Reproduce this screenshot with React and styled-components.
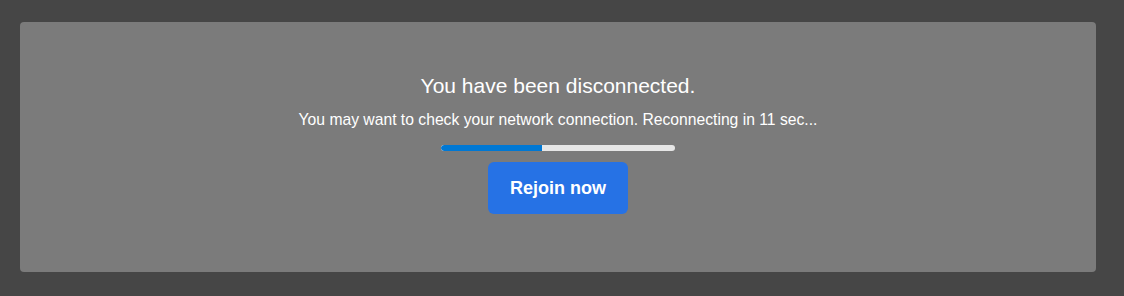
import React from "react";
import styled, { createGlobalStyle } from "styled-components";

const GlobalStyle = createGlobalStyle`
  html, body {
    margin: 0;
    padding: 0;
    background: #464646;
    font-family: "Liberation Sans", Arial, sans-serif;
  }
`;

const Page = styled.div`
  height: 296px;
  padding: 22px 28px 24px 20px;
  box-sizing: border-box;
`;

const Panel = styled.div`
  height: 250px;
  box-sizing: border-box;
  padding-top: 52px;
  background: #7b7b7b;
  border-radius: 4px;
  display: flex;
  flex-direction: column;
  align-items: center;
  color: #fff;
`;

const Title = styled.h2`
  margin: 0;
  font-size: 21px;
  font-weight: 400;
  line-height: 24px;
`;

const Message = styled.p`
  margin: 12px 0 0;
  font-size: 15.7px;
  line-height: 20px;
`;

const Track = styled.div`
  margin-top: 15px;
  width: 234px;
  height: 6px;
  border-radius: 3px;
  background: #e6e6e6;
  overflow: hidden;
`;

const Fill = styled.div`
  height: 100%;
  background: #0078d4;
  border-radius: 3px 0 0 3px;
`;

const RejoinButton = styled.button`
  margin-top: 11px;
  width: 140px;
  height: 52px;
  border: none;
  border-radius: 6px;
  background: #2672e5;
  color: #fff;
  font-family: inherit;
  font-size: 18px;
  font-weight: 700;
  cursor: pointer;
`;

export default function App() {
  const seconds = 11;
  const progress = 43;
  return (
    <Page>
      <GlobalStyle />
      <Panel>
        <Title>You have been disconnected.</Title>
        <Message>
          You may want to check your network connection. Reconnecting in {seconds} sec...
        </Message>
        <Track>
          <Fill style={{ width: `${progress}%` }} />
        </Track>
        <RejoinButton>Rejoin now</RejoinButton>
      </Panel>
    </Page>
  );
}
